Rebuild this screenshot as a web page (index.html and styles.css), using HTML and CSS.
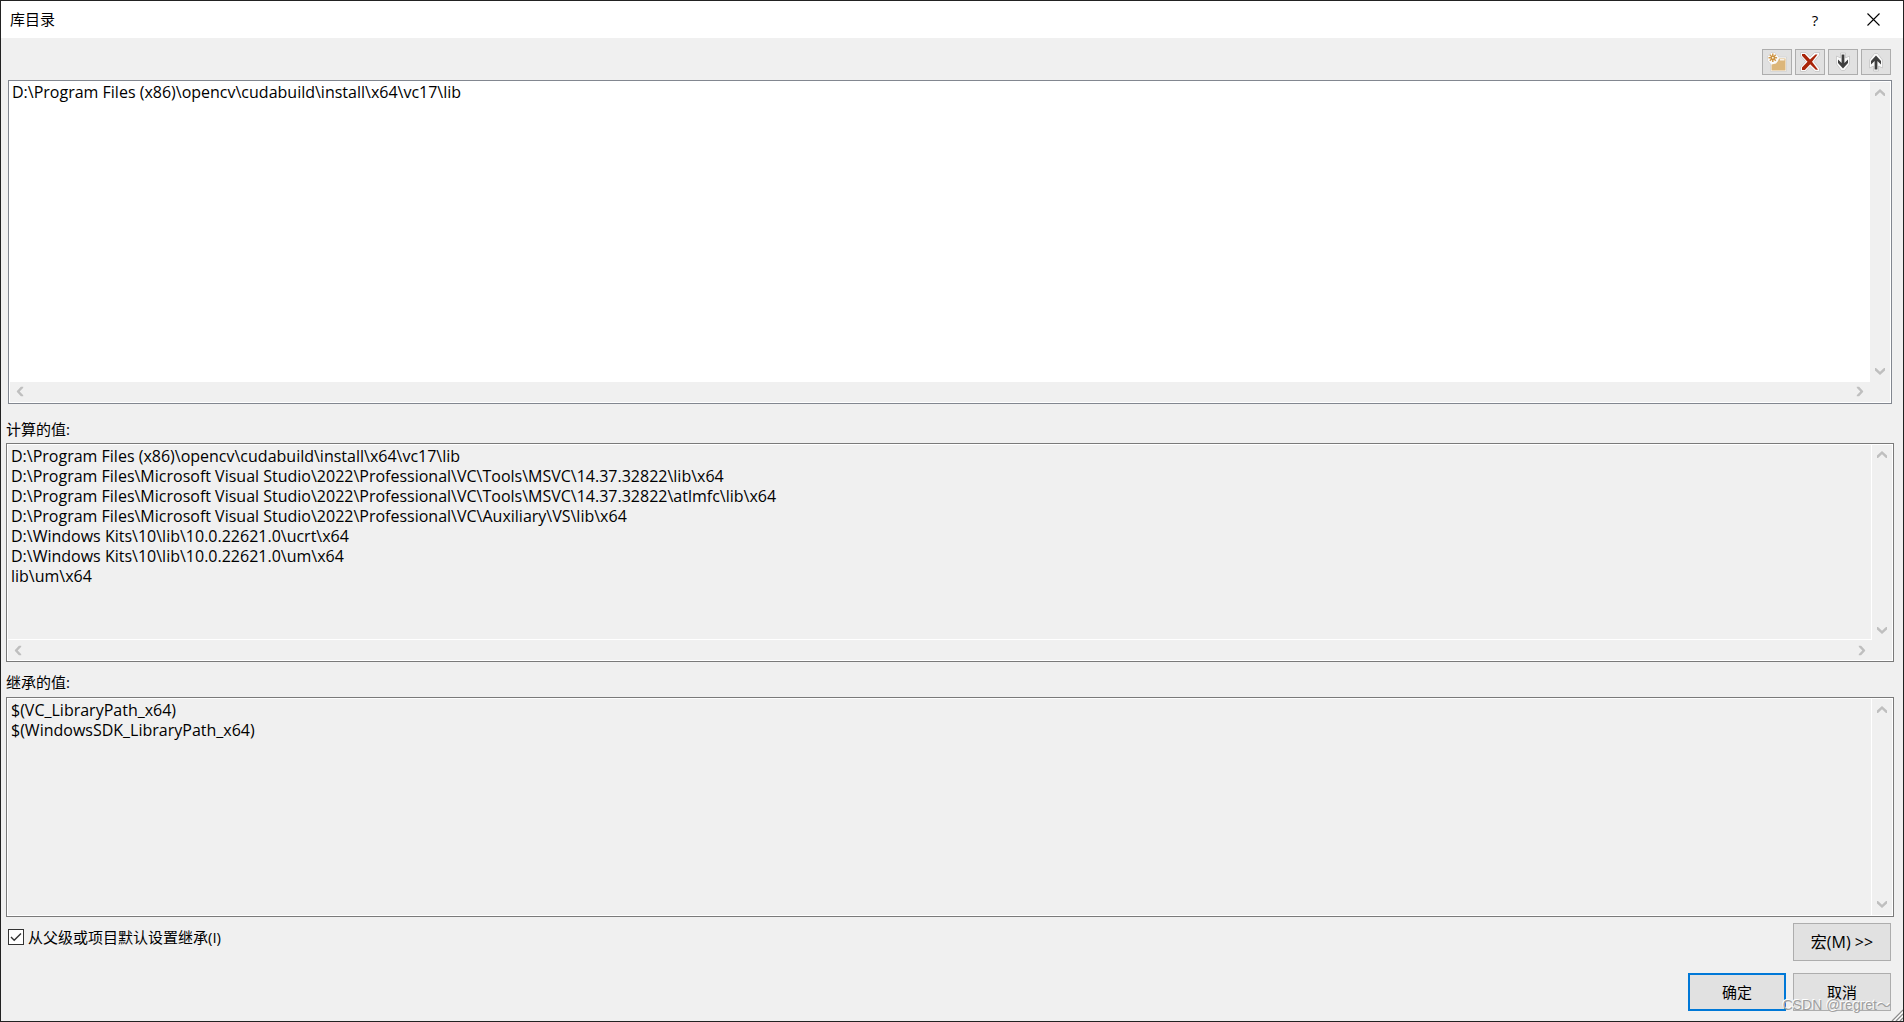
FILE: index.html
```html
<!DOCTYPE html>
<html lang="zh-CN">
<head>
    <meta charset="utf-8">
    <meta name="viewport" content="width=device-width, initial-scale=1.0">
    <title>库目录</title>
    <link rel="stylesheet" href="styles.css">
</head>
<body>
    <!-- shared arrow shape for the scroll bars -->
    <svg class="symbols" width="0" height="0">
        <symbol id="chevron" viewBox="0 0 10 7">
            <path d="M5 0 L10 4.6 V7 H9 L5 3.2 L1 7 H0 V4.6 Z" fill="#bfbfbf"/>
        </symbol>
    </svg>

    <div class="window">
        <header class="titlebar">
            <h1 class="title">库目录</h1>
            <button class="title-button" type="button" aria-label="帮助">?</button>
            <button class="title-button" type="button" aria-label="关闭">
                <svg width="13" height="13" viewBox="0 0 13 13"><path d="M0.5 0.5 L12.5 12.5 M12.5 0.5 L0.5 12.5" stroke="#000" stroke-width="1.1"/></svg>
            </button>
        </header>

        <main class="content">
            <div class="toolbar">
                <button class="tool" type="button" aria-label="新行">
                    <svg width="20" height="20" viewBox="0 0 20 20">
                        <path d="M0.5 4 L2.5 2.5 L4 0.5 H8 L9.5 2.5 L11.5 4 V5 H19.5 V19.5 H3.5 V12 L0.5 8.5 Z" fill="#fafafa" stroke="#d0d0d0" stroke-width="0.8"/>
                        <path d="M4.5 12.5 L9 11.5 L11 9 H18.5 V18.5 H4.5 Z" fill="#dcb67a"/>
                        <path d="M12 6.5 H18.5 V9 H11 Z" fill="#dcb67a"/>
                        <path d="M13 7.8 H17.5" stroke="#fff" stroke-width="1.2"/>
                        <path d="M5.8 1.5 V10.1 M1.5 5.8 H10.1 M2.8 2.8 L8.8 8.8 M8.8 2.8 L2.8 8.8" stroke="#d29a4c" stroke-width="1.5"/>
                        <circle cx="5.8" cy="5.8" r="2.1" fill="#c58a35"/>
                        <circle cx="5.8" cy="5.8" r="1" fill="#fff3df"/>
                    </svg>
                </button>
                <button class="tool" type="button" aria-label="删除">
                    <svg width="20" height="20" viewBox="0 0 20 20">
                        <path d="M0.5 0.5 H6 L10 5 L14.5 0.5 H19.5 V3 L14 9.5 L19.5 16.5 V19.5 H15 L10 14.5 L5.5 19.5 H0.5 V15 L5.5 9.5 L0.5 4 Z" fill="#fafafa" stroke="#c4c4c4" stroke-width="0.8"/>
                        <path d="M2 2 H4.8 L10 7.5 L15.5 2.4 H17.5 L12 9.8 L18 17.8 H15.8 L10.2 12.2 L4.8 18 H2 V15.4 L7.5 9.8 L2 3.8 Z" fill="#a92408"/>
                    </svg>
                </button>
                <button class="tool" type="button" aria-label="下移">
                    <svg width="20" height="20" viewBox="0 0 20 20">
                        <path d="M7.5 1 H12.5 V6 L16.5 4 V12 L11.5 18.5 H8.5 L3.5 12 V4 L7.5 6 Z" fill="#fafafa" stroke="#c4c4c4" stroke-width="0.8"/>
                        <path d="M8.6 2.5 H11.4 V11 L15 7.5 V11 L10 16.5 L5 11 V7.5 L8.6 11 Z" fill="#3f3f3f"/>
                    </svg>
                </button>
                <button class="tool" type="button" aria-label="上移">
                    <svg width="20" height="20" viewBox="0 0 20 20">
                        <path d="M7.5 19 H12.5 V14 L16.5 16 V8 L11.5 1.5 H8.5 L3.5 8 V16 L7.5 14 Z" fill="#fafafa" stroke="#c4c4c4" stroke-width="0.8"/>
                        <path d="M8.6 17.5 H11.4 V9 L15 12.5 V9 L10 3.5 L5 9 V12.5 L8.6 9 Z" fill="#3f3f3f"/>
                    </svg>
                </button>
            </div>

            <div class="box box-edit">
                <textarea class="text" aria-label="库目录" wrap="off" spellcheck="false">D:\Program Files (x86)\opencv\cudabuild\install\x64\vc17\lib</textarea>
                <div class="vbar">
                    <button type="button" class="arrow up" aria-label="向上滚动"><svg><use href="#chevron"/></svg></button>
                    <button type="button" class="arrow down" aria-label="向下滚动"><svg><use href="#chevron"/></svg></button>
                </div>
                <div class="hbar">
                    <button type="button" class="arrow left" aria-label="向左滚动"><svg><use href="#chevron"/></svg></button>
                    <button type="button" class="arrow right" aria-label="向右滚动"><svg><use href="#chevron"/></svg></button>
                </div>
                <div class="corner"></div>
            </div>

            <label class="label label-first" for="evaluated">计算的值:</label>
            <div class="box box-readonly">
                <textarea class="text" id="evaluated" wrap="off" readonly>D:\Program Files (x86)\opencv\cudabuild\install\x64\vc17\lib
D:\Program Files\Microsoft Visual Studio\2022\Professional\VC\Tools\MSVC\14.37.32822\lib\x64
D:\Program Files\Microsoft Visual Studio\2022\Professional\VC\Tools\MSVC\14.37.32822\atlmfc\lib\x64
D:\Program Files\Microsoft Visual Studio\2022\Professional\VC\Auxiliary\VS\lib\x64
D:\Windows Kits\10\lib\10.0.22621.0\ucrt\x64
D:\Windows Kits\10\lib\10.0.22621.0\um\x64
lib\um\x64</textarea>
                <div class="vbar">
                    <button type="button" class="arrow up" aria-label="向上滚动"><svg><use href="#chevron"/></svg></button>
                    <button type="button" class="arrow down" aria-label="向下滚动"><svg><use href="#chevron"/></svg></button>
                </div>
                <div class="hbar">
                    <button type="button" class="arrow left" aria-label="向左滚动"><svg><use href="#chevron"/></svg></button>
                    <button type="button" class="arrow right" aria-label="向右滚动"><svg><use href="#chevron"/></svg></button>
                </div>
                <div class="corner"></div>
            </div>

            <label class="label" for="inherited">继承的值:</label>
            <div class="box box-readonly box-vertical">
                <textarea class="text" id="inherited" wrap="off" readonly>$(VC_LibraryPath_x64)
$(WindowsSDK_LibraryPath_x64)</textarea>
                <div class="vbar">
                    <button type="button" class="arrow up" aria-label="向上滚动"><svg><use href="#chevron"/></svg></button>
                    <button type="button" class="arrow down" aria-label="向下滚动"><svg><use href="#chevron"/></svg></button>
                </div>
            </div>
        </main>

        <footer class="footer">
            <div class="options">
                <label class="inherit"><input type="checkbox" class="check" checked>从父级或项目默认设置继承(I)</label>
                <button type="button" class="button">宏(M) &gt;&gt;</button>
            </div>
            <div class="actions">
                <button type="button" class="button button-default">确定</button>
                <button type="button" class="button">取消</button>
            </div>
        </footer>

        <svg class="grip" width="12" height="12" viewBox="0 0 12 12">
            <path d="M1 12 L12 1 M5 12 L12 5 M9 12 L12 9" stroke="#8c8c8c" stroke-width="1.2"/>
            <path d="M3 12 L12 3 M7 12 L12 7" stroke="#fff" stroke-width="1"/>
        </svg>
        <span class="watermark">CSDN @regret～</span>
    </div>
</body>
</html>
```

FILE: styles.css
```css
* {
    box-sizing: border-box;
}
body {
    margin: 0;
    font-family: "Open Sans", "Noto Sans CJK SC", sans-serif;
    font-size: 15px;
    line-height: 20px;
    color: #000;
    background-color: #f0f0f0;
}
button, textarea {
    font: inherit;
    color: inherit;
    margin: 0;
    padding: 0;
}
svg {
    display: block;
}
.symbols {
    position: absolute;
}
.window {
    position: relative;
    display: flex;
    flex-direction: column;
    min-height: 100vh;
    border: 1px solid #222;
    background-color: #f0f0f0;
}

/* title bar */
.titlebar {
    display: flex;
    align-items: center;
    height: 37px;
    padding: 0 1px 0 9px;
    background-color: #fff;
}
.title {
    flex: 1;
    margin: 0;
    padding-bottom: 2px;
    font-size: 15px;
    font-weight: normal;
}
.title-button {
    display: flex;
    align-items: center;
    justify-content: center;
    width: 58px;
    height: 36px;
    border: none;
    background: none;
}

/* content */
.content {
    flex: 1;
    display: flex;
    flex-direction: column;
    padding: 11px 9px 0 5px;
}
.toolbar {
    display: flex;
    justify-content: flex-end;
    gap: 3px;
    padding: 0 3px 5px 0;
}
.tool {
    display: flex;
    align-items: center;
    justify-content: center;
    width: 30px;
    height: 26px;
    border: 1px solid #adadad;
    background-color: #e1e1e1;
}
.box {
    display: grid;
    grid-template-columns: 1fr 20px;
    grid-template-rows: 1fr 20px;
    min-height: 120px;
    padding: 1px;
    border: 1px solid #7a7a7a;
    background-color: #fff;
}
.box-edit {
    flex: 326 1 0;
    margin: 0 2px;
    border-color: #828790;
}
.box-readonly {
    flex: 220 1 0;
}
.box-vertical {
    grid-template-rows: 1fr;
}
.text {
    width: 100%;
    height: 100%;
    padding: 0 2px;
    border: none;
    outline: none;
    resize: none;
    overflow: hidden;
    font-size: 16px;
    white-space: pre;
    background-color: #fff;
}
.box-readonly .text {
    padding: 1px 3px;
    border: solid #fff;
    border-width: 0 1px 1px 0;
    background-color: #f0f0f0;
}
.box-vertical .text {
    border-bottom: none;
}
.label {
    padding: 10px 0 5px;
}
.label-first {
    padding: 15px 0 4px;
}

/* scroll bars */
.vbar, .hbar {
    display: flex;
    justify-content: space-between;
    background-color: #f0f0f0;
}
.vbar {
    flex-direction: column;
}
.corner {
    background-color: #f0f0f0;
}
.arrow {
    display: flex;
    align-items: center;
    justify-content: center;
    width: 20px;
    height: 20px;
    border: none;
    background: none;
}
.arrow svg {
    width: 10px;
    height: 7px;
}
.down svg {
    transform: rotate(180deg);
}
.left svg {
    transform: rotate(-90deg);
}
.right svg {
    transform: rotate(90deg);
}

/* footer */
.footer {
    padding: 6px 12px 10px 7px;
}
.options, .actions {
    display: flex;
    justify-content: space-between;
}
.actions {
    justify-content: flex-end;
    gap: 7px;
    padding-top: 12px;
}
.inherit {
    display: flex;
    align-items: center;
    align-self: flex-start;
    gap: 4px;
    padding-top: 4px;
}
.check {
    appearance: none;
    width: 16px;
    height: 16px;
    margin: 0;
    border: 1px solid #333;
    background: #fff url("data:image/svg+xml,%3Csvg xmlns='http://www.w3.org/2000/svg' viewBox='0 0 14 14'%3E%3Cpath d='M2 7 L5.2 10.2 L12 3.4' fill='none' stroke='%23333' stroke-width='1.4'/%3E%3C/svg%3E") center / 14px 14px no-repeat;
}
.button {
    width: 98px;
    height: 38px;
    border: 1px solid #adadad;
    background-color: #e1e1e1;
}
.options .button {
    font-size: 16px;
}
.button-default {
    border: 2px solid #0078d7;
}
.grip {
    position: absolute;
    right: 0;
    bottom: 0;
}
.watermark {
    position: absolute;
    right: 12px;
    bottom: 6px;
    font-family: "Liberation Sans", "Noto Sans CJK SC", sans-serif;
    font-size: 14px;
    color: #a0a0a0;
    text-shadow: -1px -1px 0 #fff;
}
```
